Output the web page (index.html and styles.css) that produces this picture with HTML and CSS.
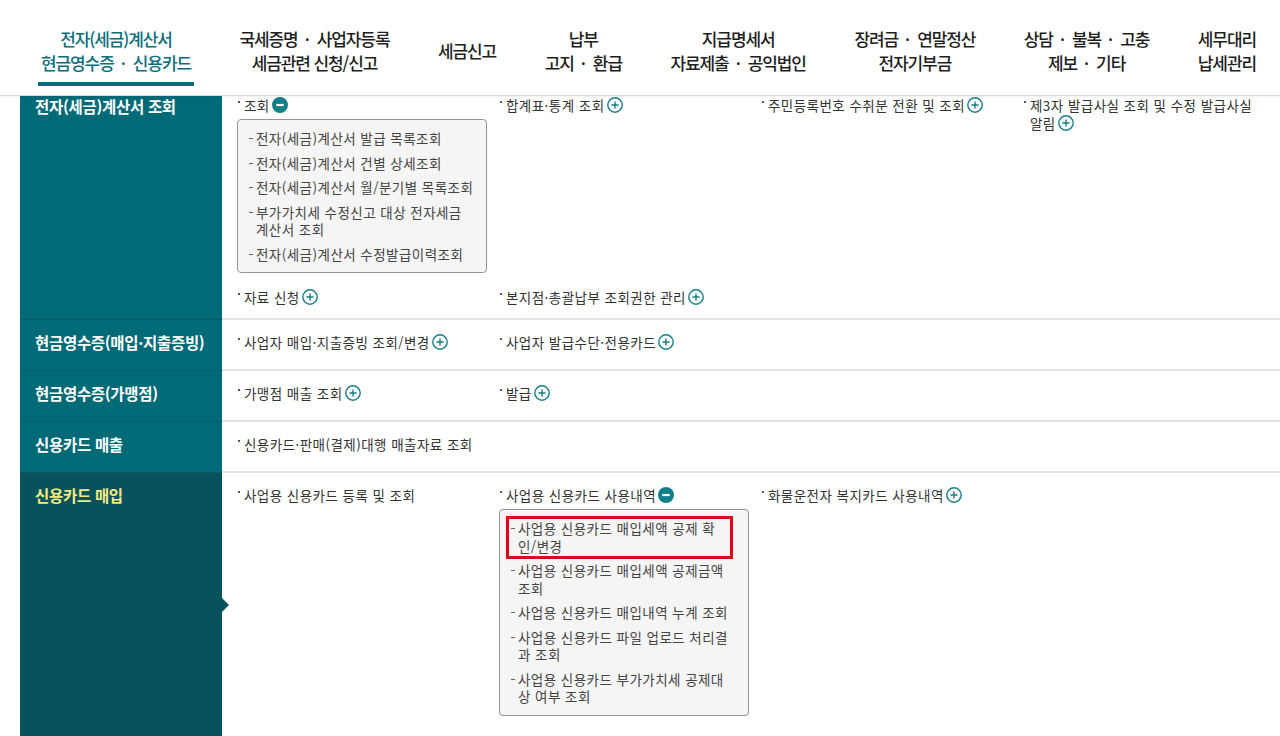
FILE: index.html
```html
<!DOCTYPE html>
<html lang="ko">
<head>
<meta charset="utf-8">
<title>홈택스 전체메뉴</title>
<link rel="stylesheet" href="styles.css">
</head>
<body>
<header class="gnb">
  <nav class="gnb-list">
    <a class="gnb-item is-active" href="#"><span>전자(세금)계산서</span><span>현금영수증<span class="sep">·</span>신용카드</span></a>
    <a class="gnb-item" href="#"><span>국세증명<span class="sep">·</span>사업자등록</span><span>세금관련 신청/신고</span></a>
    <a class="gnb-item" href="#"><span>세금신고</span></a>
    <a class="gnb-item" href="#"><span>납부</span><span>고지<span class="sep">·</span>환급</span></a>
    <a class="gnb-item" href="#"><span>지급명세서</span><span>자료제출<span class="sep">·</span>공익법인</span></a>
    <a class="gnb-item" href="#"><span>장려금<span class="sep">·</span>연말정산</span><span>전자기부금</span></a>
    <a class="gnb-item" href="#"><span>상담<span class="sep">·</span>불복<span class="sep">·</span>고충</span><span>제보<span class="sep">·</span>기타</span></a>
    <a class="gnb-item" href="#"><span>세무대리</span><span>납세관리</span></a>
  </nav>
</header>

<main class="menu">
  <section class="menu-row menu-row--first">
    <h2 class="menu-title">전자(세금)계산서 조회</h2>
    <div class="menu-body">
      <div class="menu-item">
        <span class="item-label">조회<svg class="ico" viewBox="0 0 16 16"><circle cx="8" cy="8" r="8" fill="#147e88"/><path d="M4.3 8h7.4" stroke="#fff" stroke-width="2.2"/></svg></span>
        <ul class="sub-box">
          <li>전자(세금)계산서 발급 목록조회</li>
          <li>전자(세금)계산서 건별 상세조회</li>
          <li>전자(세금)계산서 월/분기별 목록조회</li>
          <li>부가가치세 수정신고 대상 전자세금계산서 조회</li>
          <li>전자(세금)계산서 수정발급이력조회</li>
        </ul>
      </div>
      <div class="menu-item">
        <span class="item-label">합계표·통계 조회<svg class="ico" viewBox="0 0 16 16"><circle cx="8" cy="8" r="7.2" fill="none" stroke="#147e88" stroke-width="1.4"/><path d="M8 4.4v7.2M4.4 8h7.2" stroke="#147e88" stroke-width="1.4"/></svg></span>
      </div>
      <div class="menu-item">
        <span class="item-label">주민등록번호 수취분 전환 및 조회<svg class="ico" viewBox="0 0 16 16"><circle cx="8" cy="8" r="7.2" fill="none" stroke="#147e88" stroke-width="1.4"/><path d="M8 4.4v7.2M4.4 8h7.2" stroke="#147e88" stroke-width="1.4"/></svg></span>
      </div>
      <div class="menu-item">
        <span class="item-label">제3자 발급사실 조회 및 수정 발급사실 알림<svg class="ico" viewBox="0 0 16 16"><circle cx="8" cy="8" r="7.2" fill="none" stroke="#147e88" stroke-width="1.4"/><path d="M8 4.4v7.2M4.4 8h7.2" stroke="#147e88" stroke-width="1.4"/></svg></span>
      </div>
      <div class="menu-item">
        <span class="item-label">자료 신청<svg class="ico" viewBox="0 0 16 16"><circle cx="8" cy="8" r="7.2" fill="none" stroke="#147e88" stroke-width="1.4"/><path d="M8 4.4v7.2M4.4 8h7.2" stroke="#147e88" stroke-width="1.4"/></svg></span>
      </div>
      <div class="menu-item">
        <span class="item-label">본지점·총괄납부 조회권한 관리<svg class="ico" viewBox="0 0 16 16"><circle cx="8" cy="8" r="7.2" fill="none" stroke="#147e88" stroke-width="1.4"/><path d="M8 4.4v7.2M4.4 8h7.2" stroke="#147e88" stroke-width="1.4"/></svg></span>
      </div>
    </div>
  </section>

  <section class="menu-row">
    <h2 class="menu-title">현금영수증(매입·지출증빙)</h2>
    <div class="menu-body">
      <div class="menu-item">
        <span class="item-label">사업자 매입·지출증빙 조회/변경<svg class="ico" viewBox="0 0 16 16"><circle cx="8" cy="8" r="7.2" fill="none" stroke="#147e88" stroke-width="1.4"/><path d="M8 4.4v7.2M4.4 8h7.2" stroke="#147e88" stroke-width="1.4"/></svg></span>
      </div>
      <div class="menu-item">
        <span class="item-label">사업자 발급수단·전용카드<svg class="ico" viewBox="0 0 16 16"><circle cx="8" cy="8" r="7.2" fill="none" stroke="#147e88" stroke-width="1.4"/><path d="M8 4.4v7.2M4.4 8h7.2" stroke="#147e88" stroke-width="1.4"/></svg></span>
      </div>
    </div>
  </section>

  <section class="menu-row">
    <h2 class="menu-title">현금영수증(가맹점)</h2>
    <div class="menu-body">
      <div class="menu-item">
        <span class="item-label">가맹점 매출 조회<svg class="ico" viewBox="0 0 16 16"><circle cx="8" cy="8" r="7.2" fill="none" stroke="#147e88" stroke-width="1.4"/><path d="M8 4.4v7.2M4.4 8h7.2" stroke="#147e88" stroke-width="1.4"/></svg></span>
      </div>
      <div class="menu-item">
        <span class="item-label">발급<svg class="ico" viewBox="0 0 16 16"><circle cx="8" cy="8" r="7.2" fill="none" stroke="#147e88" stroke-width="1.4"/><path d="M8 4.4v7.2M4.4 8h7.2" stroke="#147e88" stroke-width="1.4"/></svg></span>
      </div>
    </div>
  </section>

  <section class="menu-row">
    <h2 class="menu-title">신용카드 매출</h2>
    <div class="menu-body">
      <div class="menu-item menu-item--wide">
        <span class="item-label">신용카드·판매(결제)대행 매출자료 조회</span>
      </div>
    </div>
  </section>

  <section class="menu-row is-current">
    <h2 class="menu-title">신용카드 매입</h2>
    <div class="menu-body">
      <div class="menu-item">
        <span class="item-label">사업용 신용카드 등록 및 조회</span>
      </div>
      <div class="menu-item">
        <span class="item-label">사업용 신용카드 사용내역<svg class="ico" viewBox="0 0 16 16"><circle cx="8" cy="8" r="8" fill="#147e88"/><path d="M4.3 8h7.4" stroke="#fff" stroke-width="2.2"/></svg></span>
        <ul class="sub-box">
          <li class="is-marked">사업용 신용카드 매입세액 공제 확인/변경</li>
          <li>사업용 신용카드 매입세액 공제금액 조회</li>
          <li>사업용 신용카드 매입내역 누계 조회</li>
          <li>사업용 신용카드 파일 업로드 처리결과 조회</li>
          <li>사업용 신용카드 부가가치세 공제대상 여부 조회</li>
        </ul>
      </div>
      <div class="menu-item">
        <span class="item-label">화물운전자 복지카드 사용내역<svg class="ico" viewBox="0 0 16 16"><circle cx="8" cy="8" r="7.2" fill="none" stroke="#147e88" stroke-width="1.4"/><path d="M8 4.4v7.2M4.4 8h7.2" stroke="#147e88" stroke-width="1.4"/></svg></span>
      </div>
    </div>
  </section>
</main>
</body>
</html>
```

FILE: styles.css
```css
html, body {
  margin: 0;
  padding: 0;
  background: #fff;
}

body {
  font-family: "Noto Sans CJK KR", "Noto Sans", sans-serif;
  color: #333;
  overflow: hidden;
}

/* ---------- top navigation ---------- */
.gnb {
  height: 95px;
  background: #fff;
  border-bottom: 1px solid #dcdcdc;
  box-shadow: 0 1px 2px rgba(0, 0, 0, 0.06);
  position: relative;
  z-index: 2;
}

.gnb-list {
  display: flex;
  justify-content: space-between;
  align-items: flex-start;
  padding: 0 21px 0 38px;
}

.gnb-item {
  box-sizing: border-box;
  height: 86px;
  padding: 27px 3px 7px;
  border-bottom: 4px solid transparent;
  display: flex;
  flex-direction: column;
  justify-content: center;
  align-items: center;
  color: #1e1e1e;
  text-decoration: none;
  font-size: 17px;
  font-weight: 500;
  line-height: 24px;
  letter-spacing: -1.1px;
  white-space: nowrap;
}

.gnb-item .sep {
  padding: 0 7px;
  letter-spacing: 0;
}

.gnb-item.is-active {
  color: #0b6e7b;
  border-bottom-color: #0b6e7b;
}

/* ---------- menu table ---------- */
.menu {
  padding-left: 20px;
}

.menu-row {
  display: flex;
}

.menu-title {
  flex: 0 0 202px;
  box-sizing: border-box;
  margin: 0;
  padding: 13px 15px 0;
  background: #006b77;
  border-bottom: 1px solid #0b5965;
  color: #fff;
  font-size: 15.5px;
  font-weight: 700;
  line-height: 18px;
  letter-spacing: -0.3px;
  position: relative;
}

.menu-body {
  flex: 1;
  display: grid;
  grid-template-columns: repeat(4, 250px);
  column-gap: 12px;
  row-gap: 15px;
  align-content: start;
  align-items: start;
  padding: 13px 0 18px 15px;
  border-bottom: 2px solid #e3e3e3;
}

.menu-row--first .menu-title {
  padding-top: 1px;
}

.menu-row--first .menu-body {
  padding-top: 0;
  padding-bottom: 12px;
}

.menu-row.is-current .menu-title {
  background: #07525d;
  color: #f4ea80;
  border-bottom: 0;
}

.menu-row.is-current .menu-title::after {
  content: "";
  position: absolute;
  right: -7px;
  top: 50%;
  margin-top: -7px;
  border-left: 7px solid #07525d;
  border-top: 7px solid transparent;
  border-bottom: 7px solid transparent;
}

.menu-row.is-current .menu-body {
  border-bottom: 0;
  padding-bottom: 21px;
}

.menu-item {
  min-width: 0;
}

.menu-item--wide {
  grid-column: span 2;
}

.item-label {
  display: block;
  position: relative;
  padding-left: 7px;
  font-size: 13.5px;
  letter-spacing: 0.45px;
  line-height: 18px;
  color: #333;
  word-break: keep-all;
}

.item-label::before {
  content: "";
  position: absolute;
  left: 1px;
  top: 5px;
  width: 2px;
  height: 2px;
  background: #555;
}

.ico {
  display: inline-block;
  width: 16px;
  height: 16px;
  margin-left: 2px;
  vertical-align: top;
  position: relative;
  top: 1px;
}

.sub-box {
  list-style: none;
  margin: 5px 0 0;
  padding: 10px 12px 9px 10px;
  background: #f5f5f5;
  border: 1px solid #8e9698;
  border-radius: 4px;
}

.sub-box li {
  position: relative;
  padding-left: 8px;
  font-size: 13.5px;
  letter-spacing: 0.45px;
  line-height: 17.5px;
  color: #444;
  word-break: break-all;
}

.sub-box li + li {
  margin-top: 7px;
}

.sub-box li::before {
  content: "";
  position: absolute;
  left: 1px;
  top: 8px;
  width: 4px;
  height: 1px;
  background: #666;
}

.sub-box li.is-marked {
  margin-right: 7px;
  outline: 3px solid #e3001b;
  outline-offset: 1px;
}
```
